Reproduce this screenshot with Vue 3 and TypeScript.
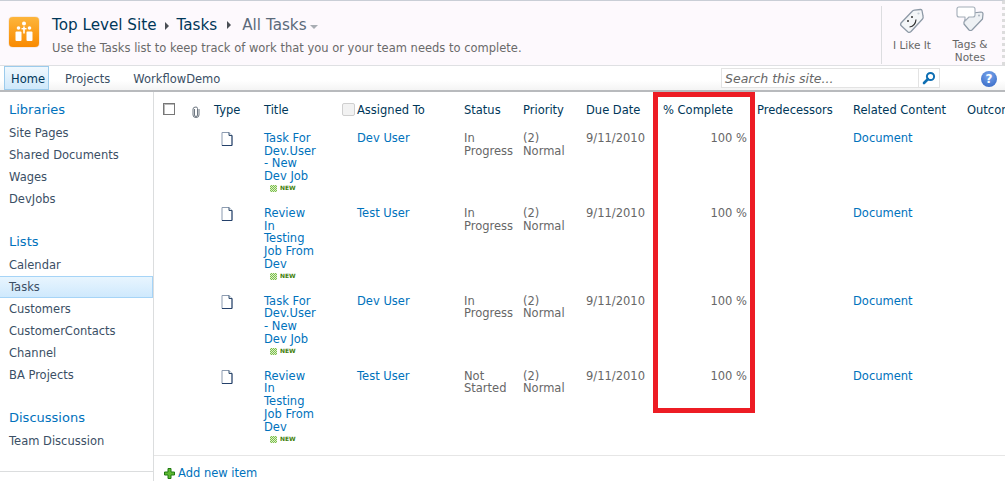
<script setup lang="ts">
interface Task {
  title: string
  user: string
  status: string
}

const libraries = ['Site Pages', 'Shared Documents', 'Wages', 'DevJobs']
const lists = ['Calendar', 'Tasks', 'Customers', 'CustomerContacts', 'Channel', 'BA Projects']

const tasks: Task[] = [
  { title: 'Task For Dev.User - New Dev Job', user: 'Dev User', status: 'In Progress' },
  { title: 'Review In Testing Job From Dev', user: 'Test User', status: 'In Progress' },
  { title: 'Task For Dev.User - New Dev Job', user: 'Dev User', status: 'In Progress' },
  { title: 'Review In Testing Job From Dev', user: 'Test User', status: 'Not Started' },
]
</script>

<template>
  <div class="page">
    <header class="title-area">
      <div class="logo">
        <svg width="22" height="22" viewBox="0 0 22 22">
          <circle cx="11" cy="2.5" r="2" fill="#fff" />
          <circle cx="5.5" cy="7" r="1.8" fill="#fff" />
          <circle cx="16.5" cy="7" r="1.8" fill="#fff" />
          <rect x="2.5" y="10.5" width="6" height="9.5" rx="1" fill="#fff" />
          <rect x="13.5" y="10.5" width="6" height="9.5" rx="1" fill="#fff" />
          <rect x="10.2" y="5.5" width="1.6" height="7" fill="#fff" />
          <rect x="8.5" y="7" width="5" height="1.4" fill="#fff" />
        </svg>
      </div>
      <div class="heading">
        <div class="crumbs">
          <span>Top Level Site</span>
          <i class="arrow"></i>
          <span>Tasks</span>
          <i class="arrow second"></i>
          <span class="current">All Tasks</span>
          <i class="caret"></i>
        </div>
        <p class="desc">Use the Tasks list to keep track of work that you or your team needs to complete.</p>
      </div>
      <div class="social">
        <div class="social-btn like">
          <svg width="26" height="26" viewBox="0 0 26 26">
            <path d="M2 15 Q1 17 2.5 18 L9 24 Q10.5 25 12 23.5 L23.5 11 Q24.5 10 24 8 L23 2.5 Q22.8 1.4 21.5 1.5 L15.5 2.2 Q14 2.4 13 3.5 Z" fill="#f4f6f8" stroke="#8d99a6" stroke-width="1.3" stroke-linejoin="round" />
            <circle cx="19.5" cy="5.5" r="1.1" fill="#c4ccd4" />
            <circle cx="9" cy="13" r="1" fill="#333" />
            <circle cx="13" cy="9" r="1" fill="#333" />
            <path d="M10.5 19 Q16.5 18 17 11.5" fill="none" stroke="#333" stroke-width="1.2" />
          </svg>
          <span>I Like It</span>
        </div>
        <div class="social-btn tags">
          <svg width="28" height="26" viewBox="0 0 28 26">
            <path d="M9 14 L17 7 L25 6 Q27 6 27 8 L26.5 13 L16 24 Q14.5 25 13 24 L8 18 Q7.5 16 9 14 Z" fill="#eef1f4" stroke="#8d99a6" stroke-width="1.2" stroke-linejoin="round" />
            <circle cx="23" cy="9.5" r="1" fill="#aab4bf" />
            <path d="M3 1 H17 Q19 1 19 3 V9 Q19 11 17 11 H13 L9 15 V11 H3 Q1 11 1 9 V3 Q1 1 3 1 Z" fill="#fff" stroke="#a3adb8" stroke-width="1.1" stroke-linejoin="round" />
          </svg>
          <span>Tags &amp;<br />Notes</span>
        </div>
      </div>
    </header>

    <nav class="topnav">
      <a class="tab active">Home</a>
      <a class="tab">Projects</a>
      <a class="tab">WorkflowDemo</a>
      <div class="search">
        <span class="search-text">Search this site...</span>
        <span class="search-btn">
          <svg width="14" height="14" viewBox="0 0 14 14">
            <circle cx="8.5" cy="5.5" r="3.6" fill="none" stroke="#0f6fb3" stroke-width="2" />
            <path d="M6 8 L2 12" stroke="#0f6fb3" stroke-width="2.6" stroke-linecap="round" />
          </svg>
        </span>
      </div>
      <span class="help">?</span>
    </nav>

    <div class="body">
      <aside class="sidenav">
        <h3>Libraries</h3>
        <a v-for="item in libraries" :key="item" class="nav-item">{{ item }}</a>
        <h3 class="group">Lists</h3>
        <a v-for="item in lists" :key="item" class="nav-item" :class="{ selected: item === 'Tasks' }">{{ item }}</a>
        <h3 class="group">Discussions</h3>
        <a class="nav-item">Team Discussion</a>
        <div class="nav-foot"></div>
      </aside>

      <main class="content">
        <table class="list">
          <colgroup>
            <col class="c-check" />
            <col class="c-clip" />
            <col class="c-type" />
            <col class="c-title" />
            <col class="c-user" />
            <col class="c-status" />
            <col class="c-priority" />
            <col class="c-due" />
            <col class="c-percent" />
            <col class="c-pred" />
            <col class="c-related" />
            <col class="c-outcome" />
          </colgroup>
          <thead>
            <tr>
              <th><span class="check"></span></th>
              <th>
                <svg class="clip" width="8" height="12" viewBox="0 0 8 12">
                  <path d="M2.5 3 V9 Q2.5 10.5 4 10.5 Q5.5 10.5 5.5 9 V2.5 Q5.5 1 4 1 Q1 1 1 3 V9 Q1 11.5 4 11.5 Q7 11.5 7 9 V3" fill="none" stroke="#6d7680" stroke-width="1" />
                </svg>
              </th>
              <th>Type</th>
              <th>Title</th>
              <th class="assigned"><span class="check light"></span>Assigned To</th>
              <th>Status</th>
              <th>Priority</th>
              <th>Due Date</th>
              <th>% Complete</th>
              <th>Predecessors</th>
              <th>Related Content</th>
              <th>Outcome</th>
            </tr>
          </thead>
          <tbody>
            <tr v-for="(task, i) in tasks" :key="i">
              <td></td>
              <td></td>
              <td class="type">
                <svg width="12" height="14" viewBox="0 0 12 14">
                  <path d="M1 .5 H8 L11 3.5 V13.5 H1 Z" fill="#fff" stroke="#8c9bb0" />
                  <path d="M8 .5 V3.5 H11" fill="#dfe5ec" stroke="#2f4a6b" />
                  <path d="M11 3.5 V13.5 H1" fill="none" stroke="#24406a" />
                </svg>
              </td>
              <td class="title">
                <a>{{ task.title }}</a>
                <div class="new">
                  <i class="new-icon"></i><span>NEW</span>
                </div>
              </td>
              <td class="user"><a>{{ task.user }}</a></td>
              <td class="status">{{ task.status }}</td>
              <td class="priority">(2) Normal</td>
              <td>9/11/2010</td>
              <td class="percent">100 %</td>
              <td></td>
              <td><a>Document</a></td>
              <td></td>
            </tr>
          </tbody>
        </table>
        <div class="add-new">
          <svg width="11" height="11" viewBox="0 0 11 11">
            <path d="M4 .5 H7 V4 H10.5 V7 H7 V10.5 H4 V7 H.5 V4 H4 Z" fill="#5fb832" stroke="#1f7a12" />
          </svg>
          <a>Add new item</a>
        </div>
      </main>
    </div>

    <div class="highlight"></div>
  </div>
</template>

<style scoped>
.page {
  position: relative;
  width: 1005px;
  height: 481px;
  overflow: hidden;
  background: #fff;
  font-family: "DejaVu Sans", Verdana, sans-serif;
  font-size: 11.5px;
  color: #676767;
}

.title-area {
  display: flex;
  height: 66px;
  box-sizing: border-box;
  padding-left: 9px;
  background: #fdf9fd;
  border-top: 1px solid #c9ced6;
  border-right: 3px dotted #dcdcdc;
  border-bottom: 1px solid #dfe0e3;
}

.logo {
  display: flex;
  align-items: center;
  justify-content: center;
  width: 30px;
  height: 30px;
  margin-top: 16px;
  border-radius: 4px;
  background: linear-gradient(#fdb53b, #f98a00);
  box-shadow: 0 0 1px #c77000;
}

.heading {
  flex: 1;
  margin-left: 13px;
  padding-top: 14px;
}

.crumbs {
  display: flex;
  align-items: center;
  height: 20px;
  font-size: 15.2px;
  color: #003759;
}

.current {
  color: #5b6a7a;
}

.arrow {
  width: 0;
  height: 0;
  margin: 1px 8px 0 8px;
  border-left: 4px solid #4a4f55;
  border-top: 4px solid transparent;
  border-bottom: 4px solid transparent;
}

.arrow.second {
  margin: 0 11px 0 10px;
}

.caret {
  width: 0;
  height: 0;
  margin: 3px 0 0 3px;
  border-top: 4px solid #a8adb3;
  border-left: 4px solid transparent;
  border-right: 4px solid transparent;
}

.desc {
  margin: 6px 0 0;
  color: #6a6a6a;
}

.social {
  display: flex;
  width: 120px;
  margin-top: 5px;
  margin-bottom: 1px;
  border-left: 1px solid #dcdde0;
  font-size: 10.5px;
  color: #666;
  text-align: center;
  line-height: 13px;
}

.social-btn {
  display: flex;
  flex-direction: column;
  align-items: center;
}

.like {
  width: 60px;
  padding-top: 2px;
}

.like span {
  margin-top: 5px;
}

.tags {
  width: 56px;
}

.tags span {
  margin-top: 6px;
}

.topnav {
  display: flex;
  align-items: flex-end;
  height: 26px;
  box-sizing: border-box;
  padding-left: 4px;
  background: linear-gradient(#fff 60%, #f4f4f4);
  border-bottom: 2px solid #b8babd;
}

.tab {
  height: 24px;
  box-sizing: border-box;
  padding: 6px 7px 0;
  color: #3b4f65;
  margin-right: 9px;
}

.tab.active {
  width: 45px;
  margin-right: 9px;
  border: 1px solid #9ccbec;
  padding: 5px 0 0 6px;
  background: linear-gradient(#f0f8fe, #cfe8fb);
  color: #003759;
}

.search {
  display: flex;
  width: 219px;
  height: 20px;
  box-sizing: border-box;
  margin: 0 0 2px auto;
  background: #fff;
  border: 1px solid #e3e3e3;
}

.search-text {
  flex: 1;
  padding: 2px 0 0 3px;
  font-size: 12.5px;
  font-style: italic;
  color: #676767;
}

.search-btn {
  display: flex;
  align-items: center;
  justify-content: center;
  width: 20px;
  border-left: 1px solid #e3e3e3;
}

.help {
  width: 16px;
  height: 16px;
  margin: 0 8px 3px 41px;
  border-radius: 50%;
  background: radial-gradient(circle at 50% 30%, #7aa7ee, #2f62c0);
  color: #fff;
  font-size: 12px;
  font-weight: bold;
  line-height: 16px;
  text-align: center;
}

.body {
  display: flex;
  height: 389px;
}

.sidenav {
  position: relative;
  flex: none;
  width: 154px;
  box-sizing: border-box;
  padding-top: 9px;
  border-right: 1px solid #dbddde;
  color: #3b4f65;
}

.sidenav h3 {
  margin: 0 0 3px;
  padding-left: 9px;
  font-size: 13px;
  font-weight: normal;
  line-height: 18px;
  color: #0072bc;
}

.sidenav h3.group {
  margin-top: 23px;
}

.nav-item {
  display: block;
  height: 22px;
  box-sizing: border-box;
  padding-left: 9px;
  line-height: 22px;
}

.nav-item.selected {
  background: linear-gradient(#e8f5fe, #cfe9fd);
  border: 1px solid #a6d4f7;
  border-left: 0;
  line-height: 20px;
}

.nav-foot {
  position: absolute;
  left: 0;
  right: 0;
  bottom: 9px;
  border-top: 1px solid #dbddde;
}

.content {
  flex: 1;
  min-width: 0;
  padding-left: 9px;
  overflow: hidden;
}

.list {
  table-layout: fixed;
  width: 864px;
  border-collapse: collapse;
}

.c-check { width: 29px; }
.c-clip { width: 22px; }
.c-type { width: 50px; }
.c-title { width: 78px; }
.c-user { width: 122px; }
.c-status { width: 59px; }
.c-priority { width: 63px; }
.c-due { width: 77px; }
.c-percent { width: 94px; }
.c-pred { width: 96px; }
.c-related { width: 114px; }
.c-outcome { width: 60px; }

.list th {
  height: 40px;
  box-sizing: border-box;
  padding: 11px 0 0;
  font-weight: normal;
  text-align: left;
  vertical-align: top;
  color: #003759;
  white-space: nowrap;
}

.list td {
  padding: 0 0 12.2px;
  vertical-align: top;
  line-height: 12.7px;
}

.list tr:last-child td {
  padding-bottom: 10px;
}

.list a {
  color: #0072bc;
}

.check {
  display: inline-block;
  width: 10px;
  height: 10px;
  background: #fff;
  border: 1px solid #777;
  box-shadow: inset 1px 1px 0 #bbb;
}

.check.light {
  width: 11px;
  height: 11px;
  margin: 0 2px 0 0;
  vertical-align: -2px;
  border-color: #cfcfcf;
  border-radius: 2px;
  background: #f2f2f2;
  box-shadow: none;
}

.clip {
  margin-top: 3px;
}

.type svg {
  display: block;
  margin-left: 7px;
}

.title {
  padding-right: 24px !important;
}

.new {
  display: flex;
  align-items: center;
  height: 12px;
  margin-left: 6px;
  font-size: 6px;
  font-weight: bold;
  color: #3f7f0c;
}

.new-icon {
  width: 7px;
  height: 7px;
  margin-right: 3px;
  background: repeating-conic-gradient(#7cc04c 0 25%, #dcefca 0 50%) 0 0 / 2px 2px;
}

.user {
  padding-left: 15px !important;
}

.status,
.priority {
  padding-right: 8px !important;
}

.percent {
  padding-right: 10px !important;
  text-align: right;
}

.add-new {
  display: flex;
  align-items: center;
  gap: 3px;
  height: 34px;
  margin-left: -9px;
  padding-left: 10px;
  border-top: 1px solid #e6e6e6;
}

.add-new a {
  color: #0072bc;
}

.highlight {
  position: absolute;
  left: 653px;
  top: 92px;
  width: 92px;
  height: 311px;
  border: 5px solid #ed1c24;
}
</style>
